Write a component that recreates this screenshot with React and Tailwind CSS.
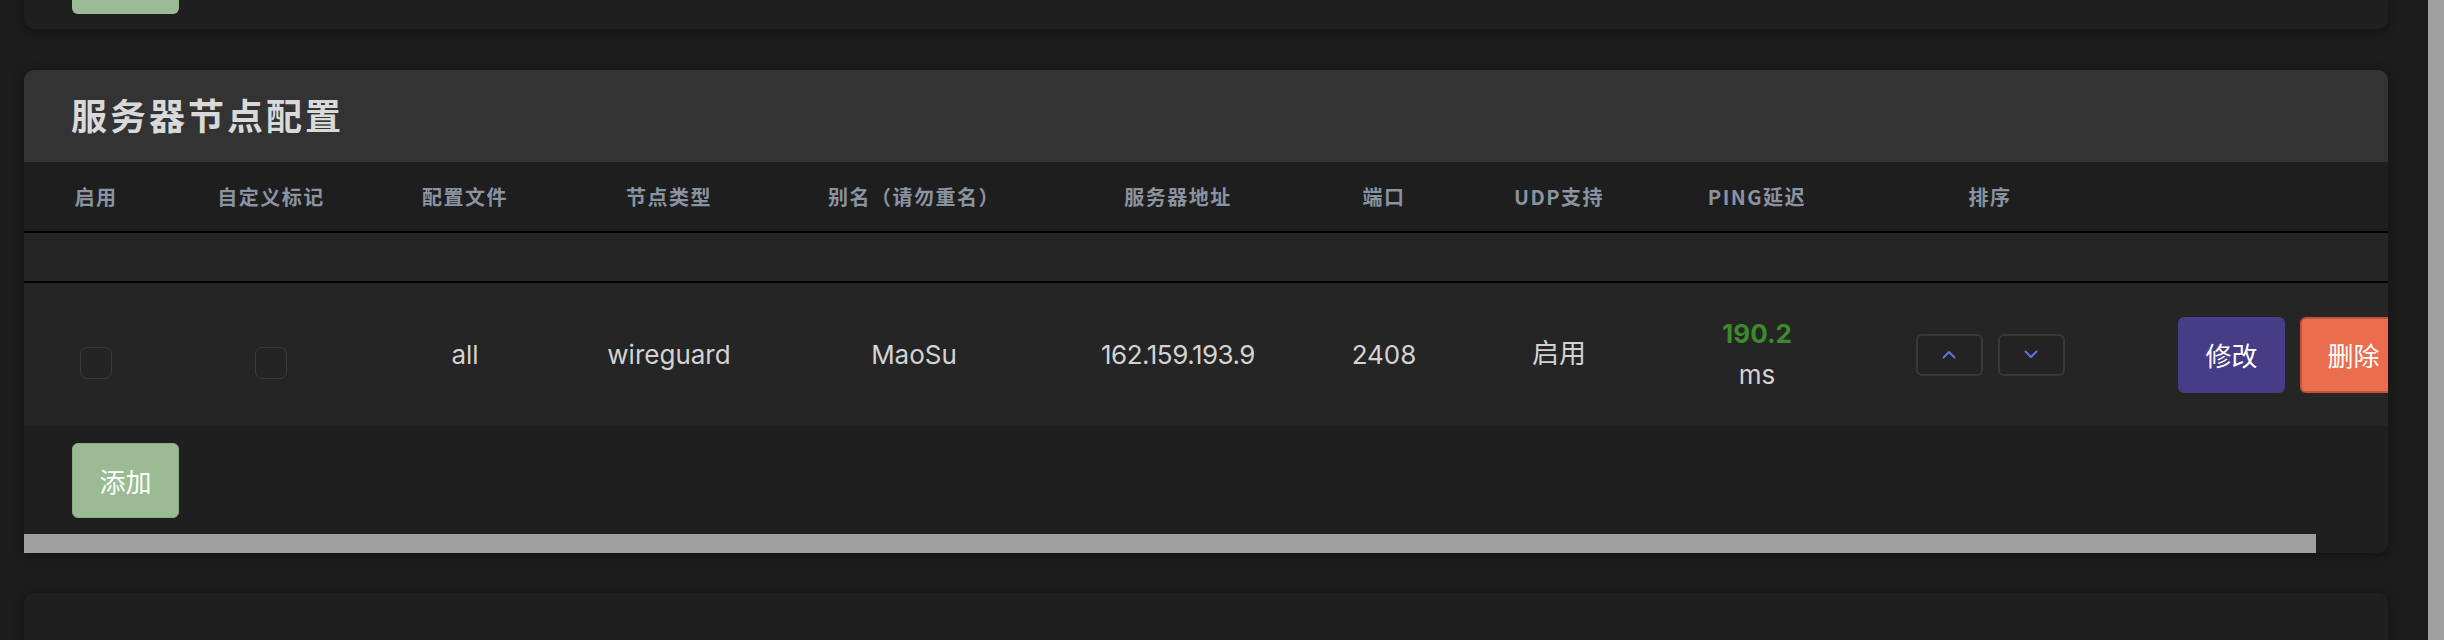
import React from "react";

const cjk = '"Noto Sans CJK SC", sans-serif';
const dataFont = 'Inter, "Noto Sans CJK SC", sans-serif';

const columns = [
  "启用",
  "自定义标记",
  "配置文件",
  "节点类型",
  "别名（请勿重名）",
  "服务器地址",
  "端口",
  "UDP支持",
  "PING延迟",
  "排序",
  "",
];

const gridCols =
  "grid grid-cols-[144px_206px_182px_226px_264px_264px_148px_202px_194px_272px_360px]";

const nodes = [
  {
    enabled: false,
    custom: false,
    config: "all",
    type: "wireguard",
    alias: "MaoSu",
    address: "162.159.193.9",
    port: "2408",
    udp: "启用",
    ping: "190.2",
  },
];

function Checkbox() {
  return (
    <span className="mt-4 block h-[32px] w-[32px] rounded-[7px] border-[1.5px] border-[#3b3b3b] bg-[#242424]" />
  );
}

function SortButton({ up }) {
  return (
    <button className="flex h-[42px] w-[67px] items-center justify-center rounded-[6px] border-2 border-[#393939] bg-[#232323]">
      <svg width="14" height="9" viewBox="0 0 14 9" fill="none">
        <path
          d={up ? "M1.5 7.5L7 2L12.5 7.5" : "M1.5 1.5L7 7L12.5 1.5"}
          stroke="#6571e4"
          strokeWidth="2"
          strokeLinecap="round"
          strokeLinejoin="round"
        />
      </svg>
    </button>
  );
}

function NodeRow({ node }) {
  const cell = "flex items-center justify-center text-[26px] text-[#d3d3d3]";
  return (
    <div className={`${gridCols} h-[143px] bg-[#252525]`} style={{ fontFamily: dataFont }}>
      <div className={cell}>
        <Checkbox />
      </div>
      <div className={cell}>
        <Checkbox />
      </div>
      <div className={cell}>{node.config}</div>
      <div className={cell}>{node.type}</div>
      <div className={cell}>{node.alias}</div>
      <div className={`${cell} tracking-[-0.5px]`}>{node.address}</div>
      <div className={cell}>{node.port}</div>
      <div className={`${cell} text-[27px]`}>{node.udp}</div>
      <div className={`${cell} flex-col leading-[1.55]`}>
        <span className="font-bold text-[#3b8a2c]">{node.ping}</span>
        <span>ms</span>
      </div>
      <div className={`${cell} gap-[15px]`}>
        <SortButton up />
        <SortButton />
      </div>
      <div className="flex items-center gap-[15px] pl-[52px]" style={{ fontFamily: cjk }}>
        <button className="h-[76px] w-[107px] rounded-[6px] bg-[#473c86] text-[26px] text-white">
          修改
        </button>
        <button className="h-[76px] w-[107px] rounded-[6px] border-2 border-[#c4503e] bg-[#ea6d4e] text-[26px] text-white">
          删除
        </button>
      </div>
    </div>
  );
}

export default function App() {
  return (
    <div className="flex h-[640px] overflow-hidden bg-[#1c1c1c]">
      <div className="flex min-w-0 flex-1 flex-col pl-[24px] pr-[40px]">
        {/* previous card, only its bottom is visible */}
        <div className="h-[29px] shrink-0 rounded-b-[10px] bg-[#1f1f1f] pl-[48px] shadow-[0_2px_10px_rgba(0,0,0,0.35)]">
          <div className="h-[14px] w-[107px] rounded-b-[6px] bg-[#9abb94]" />
        </div>

        <div className="mt-[41px] shrink-0 rounded-[10px] bg-[#1f1f1f] shadow-[0_2px_12px_rgba(0,0,0,0.35)]">
          <div className="flex h-[92px] items-center rounded-t-[10px] bg-[#333333] pb-[4px] pl-[47px]">
            <h2
              className="text-[36px] font-bold tracking-[3px] text-[#d9d9d9]"
              style={{ fontFamily: cjk }}
            >
              服务器节点配置
            </h2>
          </div>

          <div className="overflow-hidden">
            <div className="w-max min-w-full">
              <div
                className={`${gridCols} h-[71px] border-b-2 border-black bg-[#1e1e1e]`}
                style={{ fontFamily: cjk }}
              >
                {columns.map((c, i) => (
                  <div
                    key={i}
                    className="flex items-center justify-center text-[20px] font-bold tracking-[1.5px] text-[#8993a2]"
                  >
                    {c}
                  </div>
                ))}
              </div>
              <div className="h-[50px] border-b-2 border-black bg-[#252525]" />
              {nodes.map((n, i) => (
                <NodeRow key={i} node={n} />
              ))}
              <div className="pb-[16px] pl-[48px] pt-[17px]">
                <button
                  className="h-[75px] w-[107px] rounded-[6px] border border-[#8cab86] bg-[#9abb94] text-[26px] text-white"
                  style={{ fontFamily: cjk }}
                >
                  添加
                </button>
              </div>
            </div>
          </div>
          {/* horizontal scrollbar thumb */}
          <div className="h-[19px] w-[2292px] bg-[#a0a0a0]" />
        </div>

        <div className="mt-[40px] h-[60px] shrink-0 rounded-t-[10px] bg-[#1f1f1f] shadow-[0_2px_12px_rgba(0,0,0,0.35)]" />
      </div>
      {/* page scrollbar */}
      <div className="w-[16px] shrink-0 bg-[#9f9f9f]" />
    </div>
  );
}
